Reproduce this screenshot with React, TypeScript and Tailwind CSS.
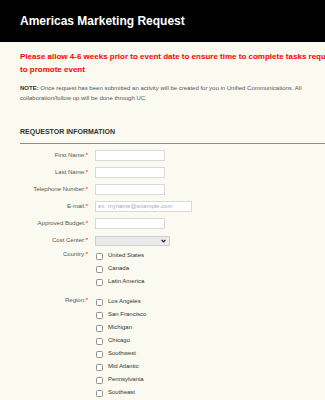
import React from "react";

const font = { fontFamily: '"Liberation Sans", Arial, sans-serif' };

function Label({ text }: { text: string }) {
  return (
    <div className="text-right text-[6px] leading-[11px] text-[#555] whitespace-nowrap">
      {text}
      <span className="text-[#f00]">*</span>
    </div>
  );
}

function TextInput({ w, placeholder }: { w: string; placeholder?: string }) {
  return (
    <div
      className={`${w} h-[11px] border border-[#d9d9d9] bg-white text-[6px] leading-[9px] text-[#aaa] pl-[2px]`}
    >
      {placeholder}
    </div>
  );
}

function Check({ label }: { label: string }) {
  return (
    <div className="flex h-[13px] items-center">
      <div className="mt-[4px] ml-[1px] h-[7px] w-[7px] rounded-[1.5px] border border-[#8f8f8f] bg-white" />
      <div className="ml-[5px] text-[6px] leading-none text-[#333]">{label}</div>
    </div>
  );
}

export default function App() {
  const regions = [
    "Los Angeles",
    "San Francisco",
    "Michigan",
    "Chicago",
    "Southwest",
    "Mid Atlantic",
    "Pennsylvania",
    "Southeast",
  ];
  return (
    <div className="w-full h-[400px] overflow-hidden bg-[#fafaf0]" style={font}>
      <div className="w-[370px]">
        <div className="flex h-[42px] items-center bg-black pl-5">
          <div className="text-[12px] font-bold text-white leading-none">Americas Marketing Request</div>
        </div>
        <div className="pl-5">
          <div className="mt-[8px] w-[325px] text-[8px] font-bold leading-[13px] text-[#f00]">
            Please allow 4-6 weeks prior to event date to ensure time to complete tasks required to promote event
          </div>
          <div className="mt-[7px] w-[300px] text-[6px] leading-[10px] text-[#555]">
            <span className="font-bold text-[#333]">NOTE:</span> Once request has been submitted an activity will be
            created for you in Unified Communications. All collaboration/follow up will be done through UC.
          </div>
          <div className="mt-[24px] text-[7px] font-bold leading-[10px] text-[#333]">REQUESTOR INFORMATION</div>
          <div className="mt-[6px] border-t border-[#8c8c8c]" />
          <div className="mt-[6px] grid grid-cols-[68px_1fr] gap-x-[7px] gap-y-[6px] items-center">
            <Label text="First Name:" />
            <TextInput w="w-[70px]" />
            <Label text="Last Name:" />
            <TextInput w="w-[70px]" />
            <Label text="Telephone Number:" />
            <TextInput w="w-[70px]" />
            <Label text="E-mail:" />
            <TextInput w="w-[97px]" placeholder="ex: myname@example.com" />
            <Label text="Approved Budget:" />
            <TextInput w="w-[70px]" />
            <Label text="Cost Center:" />
            <div className="flex h-[10px] w-[75px] items-center justify-end border border-[#d0d0d0] bg-[#ebebeb] pr-[3px]">
              <svg width="5" height="4" viewBox="0 0 5 4">
                <path d="M0.6 0.8 L2.5 2.8 L4.4 0.8" fill="none" stroke="#111" strokeWidth="1.2" />
              </svg>
            </div>
          </div>
          <div className="mt-[2px] grid grid-cols-[68px_1fr] gap-x-[7px] items-start">
            <div className="mt-[1px]">
              <Label text="Country:" />
            </div>
            <div>
              <Check label="United States" />
              <Check label="Canada" />
              <Check label="Latin America" />
            </div>
          </div>
          <div className="mt-[7px] grid grid-cols-[68px_1fr] gap-x-[7px] items-start">
            <div className="mt-[1px]">
              <Label text="Region:" />
            </div>
            <div>
              {regions.map((r) => (
                <Check key={r} label={r} />
              ))}
            </div>
          </div>
        </div>
      </div>
    </div>
  );
}
